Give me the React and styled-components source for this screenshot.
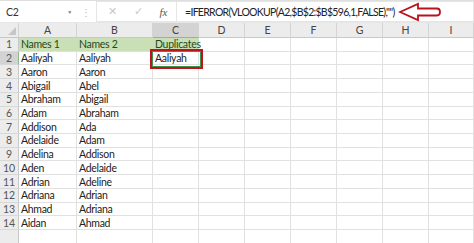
import React from "react";
import styled, { createGlobalStyle } from "styled-components";

const GlobalStyle = createGlobalStyle`
  html, body { margin: 0; padding: 0; background: #fff; }
  body { font-family: Lato, "Open Sans", "Liberation Sans", sans-serif; overflow: hidden; }
`;

const COLS = ["A", "B", "C", "D", "E", "F", "G", "H", "I"];
const WIDTHS = [58, 76, 46, 46, 46, 46, 46, 46, 45];

const ROWS = [
  ["Names 1", "Names 2", "Duplicates"],
  ["Aaliyah", "Aaliyah", "Aaliyah"],
  ["Aaron", "Aaron", ""],
  ["Abigail", "Abel", ""],
  ["Abraham", "Abigail", ""],
  ["Adam", "Abraham", ""],
  ["Addison", "Ada", ""],
  ["Adelaide", "Adam", ""],
  ["Adelina", "Addison", ""],
  ["Aden", "Adelaide", ""],
  ["Adrian", "Adeline", ""],
  ["Adriana", "Adrian", ""],
  ["Ahmad", "Adriana", ""],
  ["Aidan", "Ahmad", ""],
  ["", "", ""],
];

const Page = styled.div`
  width: 474px;
  height: 243px;
  overflow: hidden;
  display: flex;
  flex-direction: column;
`;

const RibbonEdge = styled.div`
  height: 3px;
  background: #f1f1f1;
  border-bottom: 1px solid #dedede;
`;

const FormulaBar = styled.div`
  height: 25px;
  display: flex;
  align-items: center;
  background: #fff;
  border-bottom: 1px solid #e6e6e6;
`;

const NameBox = styled.div`
  width: 76px;
  height: 19px;
  display: flex;
  align-items: center;
  justify-content: space-between;
  padding: 0 4px 0 6px;
  box-sizing: border-box;
  font-size: 10.5px;
  letter-spacing: -0.3px;
  color: #333;
`;

const Caret = styled.span`
  font-size: 5px;
  color: #777;
`;

const Grip = styled.div`
  width: 20px;
  text-align: center;
  color: #b8b8b8;
  font-size: 10px;
`;

const ButtonGroup = styled.div`
  height: 19px;
  display: flex;
  align-items: center;
  border: 1px solid #e6e6e6;
  border-right: none;
  padding-left: 2px;
`;

const BarButton = styled.span`
  width: ${p => p.$w}px;
  display: inline-flex;
  justify-content: center;
  align-items: center;
  color: ${p => p.$muted ? "#c8c8c8" : "#555"};
  font-family: "Liberation Serif", serif;
  font-style: ${p => p.$italic ? "italic" : "normal"};
  font-size: 11px;
`;

const FormulaInput = styled.div`
  flex: 1;
  height: 19px;
  display: flex;
  align-items: center;
  border: 1px solid #e6e6e6;
  padding-left: 8px;
  font-size: 10.5px;
  letter-spacing: -0.7px;
  color: #222;
  white-space: nowrap;
`;

const Arrow = styled.svg`
  margin-left: 3px;
  flex: none;
`;

const Gap = styled.div`
  height: 3px;
  background: #fff;
`;

const Sheet = styled.div`
  display: grid;
  grid-template-columns: 19px ${WIDTHS.map(w => w + "px").join(" ")};
  grid-template-rows: 15px repeat(15, 13.72px);
`;

const Corner = styled.div`
  background: #ececec;
  border-right: 1px solid #d4d4d4;
  border-bottom: 1px solid #c8c8c8;
  position: relative;
  &::after {
    content: "";
    position: absolute;
    right: 2px;
    bottom: 2px;
    border-left: 8px solid transparent;
    border-bottom: 8px solid #c6c6c6;
  }
`;

const ColHead = styled.div`
  background: ${p => p.$active ? "#d3d3d3" : "#ececec"};
  border-right: 1px solid #d4d4d4;
  border-bottom: 1px solid ${p => p.$active ? "#8fb98a" : "#c8c8c8"};
  display: flex;
  align-items: center;
  justify-content: center;
  font-size: 10.5px;
  color: #444;
`;

const RowHead = styled.div`
  background: ${p => p.$active ? "#d3d3d3" : "#ececec"};
  border-right: 1px solid ${p => p.$active ? "#8fb98a" : "#c8c8c8"};
  border-bottom: 1px solid #d8d8d8;
  display: flex;
  align-items: center;
  justify-content: center;
  font-size: 10.5px;
  color: #555;
`;

const Cell = styled.div`
  position: relative;
  z-index: ${p => p.$active ? 2 : "auto"};
  background: ${p => p.$head ? "#c9e0b6" : "transparent"};
  border-right: 1px solid ${p => p.$head ? "#c9e0b6" : "#e1e1e1"};
  border-bottom: 1px solid #e1e1e1;
  display: flex;
  align-items: center;
  padding-left: 2px;
  font-size: 10.5px;
  letter-spacing: -0.3px;
  color: ${p => p.$head ? "#1f4a1c" : "#222"};
  white-space: nowrap;
`;

const Highlight = styled.div`
  position: absolute;
  left: -3px;
  top: -3px;
  right: -5px;
  bottom: -5px;
  border: 2px solid #c0141b;
  box-shadow: inset 0 0 0 1px #3f8f4f;
  pointer-events: none;
`;

export default function App() {
  return (
    <Page>
      <GlobalStyle />
      <RibbonEdge />
      <FormulaBar>
        <NameBox>
          C2 <Caret>▼</Caret>
        </NameBox>
        <Grip>⋮</Grip>
        <ButtonGroup>
          <BarButton $w={26} $muted>✕</BarButton>
          <BarButton $w={26} $muted>✓</BarButton>
          <BarButton $w={25} $italic>fx</BarButton>
        </ButtonGroup>
        <FormulaInput>
          =IFERROR(VLOOKUP(A2,$B$2:$B$596,1,FALSE),"")
          <Arrow width="44" height="20" viewBox="0 0 44 20">
            <path
              d="M2 10 L20 2 L20 6.5 L39 6.5 Q42 6.5 42 10 Q42 13.5 39 13.5 L20 13.5 L20 18 Z"
              fill="none"
              stroke="#b8141c"
              strokeWidth="1.8"
            />
          </Arrow>
        </FormulaInput>
      </FormulaBar>
      <Gap />
      <Sheet>
        <Corner />
        {COLS.map(c => (
          <ColHead key={c} $active={c === "C"}>{c}</ColHead>
        ))}
        {ROWS.map((row, r) => {
          const isActive = i => r === 1 && i === 2;
          return (
            <React.Fragment key={r}>
              <RowHead $active={r === 1}>{r < 14 ? r + 1 : ""}</RowHead>
              {COLS.map((c, i) => (
                <Cell key={c} $head={r === 0 && i < 3} $active={isActive(i)}>
                  {row[i] || ""}
                  {isActive(i) && <Highlight />}
                </Cell>
              ))}
            </React.Fragment>
          );
        })}
      </Sheet>
    </Page>
  );
}
